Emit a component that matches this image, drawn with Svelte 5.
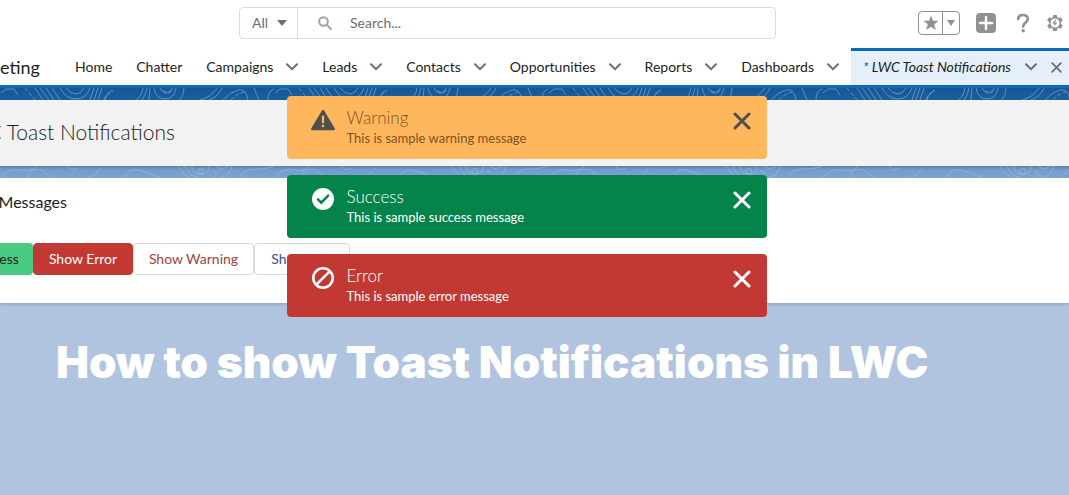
<script lang="ts">
  type NavItem = { label: string; menu: boolean };
  type Toast = { variant: string; title: string; message: string };

  const navItems: NavItem[] = [
    { label: 'Home', menu: false },
    { label: 'Chatter', menu: false },
    { label: 'Campaigns', menu: true },
    { label: 'Leads', menu: true },
    { label: 'Contacts', menu: true },
    { label: 'Opportunities', menu: true },
    { label: 'Reports', menu: true },
    { label: 'Dashboards', menu: true }
  ];

  // contour lines of the themed background, one tile each
  const topLines =
    'M1 5l5-4h8l4 6M35 0l8 12M40 0l9 12M46 0l8 12M52 0l8 12M60 0q6 11 16 11T90 0M66 0q5 6 10 6t8-6M94 0l-4 12M98 0l-4 12M102 0l-4 12M105 12q2-8 8-10M136 12q6-4 7-12M142 12q4-5 5-12M149 12l1-12M154 0q2 11 11 11T176 0M160 0q2 5 7 5t5-5M180 12q4-5 4-12M200 12q10-2 17-12M209 12q9-3 13-12M223 12q7-8 15-10t10 10M254 0l5 12M268 12q0-9 6-11';
  const topDashes = 'M25 0l10 12M104 12q2-7 9-8M163 2q4 4 8 0M231 12q5-6 13-8';
  const midLines =
    'M0 12q8-10 20-8t16-4M28 12q0-11 14-8l10 8M68 0q2 6 10 2M125 12q3-10 13-8t22 8M178 0q4 8 12 12M185 0q3 10 14 12M192 0q0 8 9 8t8-8M200 2q-4 4 0 6t3-5zM212 6q5-3 4 3t-7 3M216 0q4 4 8 2t5-2M220 12q10-2 12-12M240 12q3-9 15-9t19-3M88 12q8-3 13-10';

  let toasts: Toast[] = $state([
    { variant: 'warning', title: 'Warning', message: 'This is sample warning message' },
    { variant: 'success', title: 'Success', message: 'This is sample success message' },
    { variant: 'error', title: 'Error', message: 'This is sample error message' }
  ]);

  function closeToast(toast: Toast) {
    toasts = toasts.filter((t) => t !== toast);
  }

  function showToast(variant: string, title: string) {
    toasts.push({ variant, title, message: `This is sample ${variant} message` });
  }
</script>

{#snippet chevron()}
  <svg class="chevron" viewBox="0 0 12 8" aria-hidden="true">
    <path d="M1 1.2l5 5 5-5" />
  </svg>
{/snippet}

{#snippet cross()}
  <svg class="cross" viewBox="0 0 18 18" aria-hidden="true">
    <path d="M2 2l14 14M16 2L2 16" />
  </svg>
{/snippet}

{#snippet contours(id: string, lines: string, dashes: string)}
  <svg class="contours" aria-hidden="true">
    <defs>
      <pattern {id} width="274" height="12" patternUnits="userSpaceOnUse">
        <path d={lines} />
        <path class="dashed" d={dashes} />
      </pattern>
    </defs>
    <rect width="100%" height="12" fill="url(#{id})" stroke="none" />
  </svg>
{/snippet}

<div class="page">
  <header class="global-header">
    <form class="search" role="search">
      <div class="scope">
        <select aria-label="Search scope">
          <option>All</option>
        </select>
        <svg viewBox="0 0 10 6" aria-hidden="true"><path d="M0 0h10L5 6z" /></svg>
      </div>
      <svg class="magnifier" viewBox="0 0 14 14" aria-hidden="true">
        <circle cx="5.5" cy="5.5" r="4.3" />
        <path d="M9 9l4 4" />
      </svg>
      <input type="text" placeholder="Search..." aria-label="Search" />
    </form>

    <div class="actions">
      <div class="favorites">
        <button aria-label="Favorite">
          <svg width="16" height="16" viewBox="0 0 16 16"><path d="M8 .5l2 5.200h5.600l-4.400 3.500 1.700 5.800L8 11.700 3.100 15l1.700-5.800L.4 5.700H6z" /></svg>
        </button>
        <button aria-label="Favorites list">
          <svg width="8" height="6" viewBox="0 0 8 6"><path d="M0 0h8L4 6z" /></svg>
        </button>
      </div>
      <button aria-label="Global actions">
        <svg width="20" height="20" viewBox="0 0 20 20">
          <rect width="20" height="20" rx="4" />
          <path d="M10 4v12M4 10h12" stroke="#fff" stroke-width="2.400" stroke-linecap="round" />
        </svg>
      </button>
      <button class="help" aria-label="Help">
        <svg width="14" height="20" viewBox="0 0 14 20">
          <path d="M2.200 6C2.200 3.400 4.200 2 7 2s4.800 1.600 4.800 4.200c0 3.200-4.600 3.400-4.600 7.200" fill="none" stroke="#919191" stroke-width="2.700" stroke-linecap="round" />
          <circle cx="7.200" cy="17.800" r="1.700" />
        </svg>
      </button>
      <button aria-label="Setup">
        <svg width="18" height="18" viewBox="0 0 20 20">
          <path fill-rule="evenodd" d="M8 1h4l.5 2.700 1.600.9 2.600-1 2 3.500-2.100 1.700v2.400l2.100 1.700-2 3.500-2.600-1-1.600.9L12 19H8l-.5-2.700-1.600-.9-2.600 1-2-3.500 2.100-1.700V8.800L1.300 7.100l2-3.500 2.600 1 1.600-.9zM10 5a5 5 0 1 0 0 10 5 5 0 0 0 0-10z" />
          <path d="M10.500 6.200L6.800 10.600h2.600L8.500 14l4.200-4.600H10l1.500-3.200z" />
        </svg>
      </button>
    </div>
  </header>

  <nav class="context-bar">
    <span class="app-name">eting</span>
    <ul class="nav-items">
      {#each navItems as item (item.label)}
        <li>
          <a href="#{item.label.toLowerCase()}">{item.label}</a>
          {#if item.menu}
            <button aria-label="{item.label} menu">{@render chevron()}</button>
          {/if}
        </li>
      {/each}
    </ul>
    <div class="active-tab">
      <a href="#lwc"><span class="star">*</span> LWC Toast Notifications</a>
      <button aria-label="Tab menu">{@render chevron()}</button>
      <button class="close-tab" aria-label="Close tab">{@render cross()}</button>
    </div>
  </nav>

  <main>
    {@render contours('contours-top', topLines, topDashes)}
    <section class="page-header">
      <h1>C Toast Notifications</h1>
    </section>
    {@render contours('contours-mid', midLines, '')}
    <section class="card">
      <h2>Messages</h2>
      <div class="buttons">
        <button class="btn success" onclick={() => showToast('success', 'Success')}>ess</button>
        <button class="btn error" onclick={() => showToast('error', 'Error')}>Show Error</button>
        <button class="btn warning" onclick={() => showToast('warning', 'Warning')}>Show Warning</button>
        <button class="btn info" onclick={() => showToast('info', 'Info')}>Show Info</button>
      </div>
    </section>
    <p class="caption">How to show Toast Notifications in LWC</p>
  </main>

  <div class="toasts">
    {#each toasts as toast}
      <div class="toast {toast.variant}" role="status">
        <svg class="toast-icon" viewBox="0 0 24 24" aria-hidden="true">
          {#if toast.variant === 'warning'}
            <path fill="#514f4d" d="M10.800 2.700q1.200-1.900 2.400 0l10.500 17.600q.9 1.900-1.200 1.900h-21q-2.100 0-1.200-1.900z" />
            <path d="M12 8.500v6" stroke="#ffb75d" stroke-width="2.200" stroke-linecap="round" />
            <circle cx="12" cy="18" r="1.300" fill="#ffb75d" />
          {:else if toast.variant === 'error'}
            <circle cx="12" cy="12" r="9.700" fill="none" stroke="#fff" stroke-width="2.600" />
            <path d="M5.300 18.700L18.700 5.300" stroke="#fff" stroke-width="2.600" />
          {:else}
            <circle cx="12" cy="12" r="11" fill="#fff" />
            <path d="M7 12.300l3.300 3.300 6.800-7" fill="none" stroke="#04844b" stroke-width="2.500" stroke-linecap="round" />
          {/if}
        </svg>
        <div class="toast-text">
          <h3>{toast.title}</h3>
          <p>{toast.message}</p>
        </div>
        <button aria-label="Close" onclick={() => closeToast(toast)}>{@render cross()}</button>
      </div>
    {/each}
  </div>
</div>

<style>
  :global(body) {
    background: #b0c4df;
  }

  .page {
    position: relative;
    min-height: 100vh;
    overflow: hidden;
    font-family: Lato, "Open Sans", sans-serif;
    font-size: 14px;
    line-height: 20px;
    color: #201e1d;
  }

  button {
    display: flex;
    align-items: center;
    padding: 0;
    border: 0;
    background: none;
    font: inherit;
    color: inherit;
    cursor: pointer;
  }

  h1, h2, h3, p, ul {
    margin: 0;
    padding: 0;
    font-weight: 400;
  }

  a {
    color: inherit;
    text-decoration: none;
  }

  .global-header {
    display: flex;
    align-items: center;
    justify-content: space-between;
    height: 48px;
    padding: 0 5px 0 239px;
    box-sizing: border-box;
    background: #fff;
  }

  .search {
    display: flex;
    align-items: center;
    flex: 0 1 537px;
    height: 32px;
    margin-bottom: 2px;
    box-sizing: border-box;
    border: 1px solid #dddbda;
    border-radius: 4px;
    color: #706e6b;
  }

  .scope {
    display: flex;
    align-items: center;
    width: 57px;
    height: 30px;
    border-right: 1px solid #dddbda;
  }

  .scope select {
    width: 37px;
    padding: 0 0 0 12px;
    border: 0;
    background: none;
    appearance: none;
    font: inherit;
    color: inherit;
  }

  .scope svg {
    width: 10px;
    height: 6px;
    fill: #706e6b;
  }

  .magnifier {
    width: 14px;
    height: 14px;
    margin: 0 18px 0 20px;
    fill: none;
    stroke: #a5a3a1;
    stroke-width: 2;
    stroke-linecap: round;
  }

  .search input {
    flex: 1;
    min-width: 0;
    padding: 0;
    border: 0;
    outline: 0;
    background: none;
    font: inherit;
    color: inherit;
  }

  .search input::placeholder {
    color: #706e6b;
    opacity: 1;
  }

  .actions {
    display: flex;
    align-items: center;
    gap: 16px;
    margin-bottom: 2px;
  }

  .actions svg {
    flex-shrink: 0;
    fill: #919191;
  }

  .help {
    margin-left: 4px;
  }

  .favorites {
    display: flex;
    height: 24px;
    box-sizing: border-box;
    border: 1px solid #919191;
    border-radius: 4px;
  }

  .favorites button {
    justify-content: center;
    width: 23px;
  }

  .favorites button + button {
    width: 17px;
    border-left: 1px solid #919191;
  }

  .context-bar {
    display: flex;
    height: 40px;
    box-sizing: border-box;
    border-bottom: 3px solid #0b6bb8;
    background: #fff;
  }

  .app-name {
    align-self: center;
    width: 75px;
    font-size: 18px;
  }

  .nav-items {
    display: flex;
    flex: 1;
    justify-content: space-between;
    list-style: none;
  }

  .nav-items li {
    display: flex;
    align-items: center;
    gap: 13px;
  }

  .chevron {
    width: 12px;
    height: 8px;
    fill: none;
    stroke: #706e6b;
    stroke-width: 2;
    stroke-linecap: round;
  }

  .cross {
    width: 18px;
    height: 18px;
    fill: none;
    stroke: currentColor;
    stroke-width: 3;
    stroke-linecap: round;
  }

  .active-tab {
    display: flex;
    align-items: center;
    justify-content: space-between;
    width: 218px;
    margin-left: 12px;
    padding: 0 7px 2px 12px;
    box-sizing: border-box;
    border-top: 3px solid #0b6bb8;
    background: #e4eff9;
    font-style: italic;
  }

  .star {
    color: #0b5cab;
  }

  .close-tab .cross {
    width: 11px;
    height: 11px;
    color: #706e6b;
  }

  main {
    background: linear-gradient(#195594, #1b5f9e 12px, #6f98c8 78px, #7fa3cf 90px, #b0c4df 215px);
  }

  .contours {
    display: block;
    width: 100%;
    height: 12px;
    fill: none;
    stroke: #a3c4e4;
    stroke-opacity: 0.5;
  }

  .contours .dashed {
    stroke-dasharray: 4 2;
  }

  .page-header {
    display: flex;
    align-items: center;
    height: 66px;
    padding-bottom: 2px;
    box-sizing: border-box;
    background: #f3f2f2;
    box-shadow: 0 2px 2px rgba(0, 0, 0, 0.15);
  }

  .page-header h1 {
    display: flex;
    justify-content: flex-end;
    width: 175px;
    overflow: hidden;
    white-space: nowrap;
    font-size: 21px;
    font-weight: 300;
    line-height: 28px;
  }

  .card {
    height: 125px;
    padding-top: 14px;
    box-sizing: border-box;
    background: #fff;
    box-shadow: 0 2px 2px rgba(0, 0, 0, 0.12);
  }

  .card h2 {
    display: flex;
    justify-content: flex-end;
    width: 67px;
    overflow: hidden;
    font-size: 16px;
  }

  .buttons {
    display: flex;
    margin-top: 31px;
  }

  .btn {
    justify-content: center;
    height: 32px;
    padding: 0 16px;
    box-sizing: border-box;
    border: 1px solid #dddbda;
    border-radius: 4px;
    white-space: nowrap;
  }

  .btn.success {
    width: 33px;
    padding: 0 15px 0 0;
    border: 0;
    border-radius: 0 4px 4px 0;
    background: #4bca81;
  }

  .btn.error {
    width: 100px;
    border-color: #c23934;
    background: #c23934;
    color: #fff;
  }

  .btn.warning {
    width: 121px;
    color: #a0453f;
  }

  .btn.info {
    width: 96px;
    color: #3a4f8f;
  }

  .caption {
    padding: 33px 0 0 56px;
    font-family: Inter, Lato, sans-serif;
    font-size: 44px;
    font-weight: 900;
    line-height: 52px;
    white-space: nowrap;
    color: #fff;
  }

  /* floats over the page */
  .toasts {
    position: absolute;
    top: 96px;
    left: calc(50% - 248px);
    display: grid;
    gap: 16px;
    width: 480px;
  }

  .toast {
    display: flex;
    align-items: flex-start;
    height: 63px;
    padding: 12px 16px 0 24px;
    box-sizing: border-box;
    border-radius: 4px;
    color: #fff;
  }

  .toast.warning {
    background: #ffb75d;
    color: #514f4d;
  }

  .toast.warning .toast-text {
    color: #80511f;
  }

  .toast.success,
  .toast.info {
    background: #04844b;
  }

  .toast.error {
    background: #c23934;
  }

  .toast-icon {
    width: 24px;
    height: 24px;
  }

  .toast-text {
    flex: 1;
    margin-left: 12px;
  }

  .toast h3 {
    font-size: 17px;
    font-weight: 300;
  }

  .toast p {
    font-size: 13px;
  }

  .toast button {
    margin-top: 4px;
  }
</style>
